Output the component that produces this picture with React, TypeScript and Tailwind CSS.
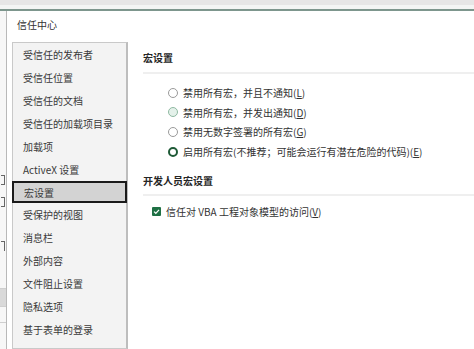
import React from 'react';

const font = { fontFamily: '"Noto Sans CJK SC", "Noto Sans", sans-serif' };

const navItems = [
  '受信任的发布者',
  '受信任位置',
  '受信任的文档',
  '受信任的加载项目录',
  '加载项',
  'ActiveX 设置',
  '宏设置',
  '受保护的视图',
  '消息栏',
  '外部内容',
  '文件阻止设置',
  '隐私选项',
  '基于表单的登录',
];

type RadioKind = 'off' | 'hover' | 'on';

const options: { label: string; key: string; kind: RadioKind }[] = [
  { label: '禁用所有宏，并且不通知(', key: 'L', kind: 'off' },
  { label: '禁用所有宏，并发出通知(', key: 'D', kind: 'hover' },
  { label: '禁用无数字签署的所有宏(', key: 'G', kind: 'off' },
  { label: '启用所有宏(不推荐；可能会运行有潜在危险的代码)(', key: 'E', kind: 'on' },
];

function Radio({ kind }: { kind: RadioKind }) {
  if (kind === 'on') {
    return <span className="box-border h-[10px] w-[10px] rounded-full border-[2.5px] border-[#1e5a36] bg-white" />;
  }
  if (kind === 'hover') {
    return <span className="box-border h-[10px] w-[10px] rounded-full border border-[#8fb9a2] bg-[#e4f1ea]" />;
  }
  return <span className="box-border h-[10px] w-[10px] rounded-full border border-[#9a9a9a] bg-white" />;
}

export default function App() {
  return (
    <div className="flex h-[349px] w-[474px] flex-col overflow-hidden bg-white text-[10px]" style={font}>
      {/* window chrome above the dialog */}
      <div className="h-[5px] bg-[#e6e6e6]" />
      <div className="h-[4px] bg-[#f3f5f4]" />
      <div className="h-[2px] bg-[#7d968d]" />

      <div className="flex flex-1">
        {/* sheet peeking out on the left */}
        <div className="flex w-[6px] flex-col bg-[#f7f7f7]">
          <div className="h-[164px]" />
          <div className="ml-[1px] h-[10px] w-[4px] border-y border-r border-[#666]" />
          <div className="h-[12px]" />
          <div className="ml-[1px] h-[10px] w-[4px] border-y border-r border-[#666]" />
          <div className="h-[34px]" />
          <div className="ml-[1px] h-[10px] w-[4px] border-t border-r border-[#666]" />
          <div className="h-[38px] border-b border-[#cfcfcf]" />
          <div className="h-[18px] border-b border-[#cfcfcf] bg-[#d9d9d9]" />
          <div className="h-[16px] border-b border-[#cfcfcf]" />
        </div>

        {/* dialog */}
        <div className="flex flex-1 flex-col border-l border-[#b9b9b9] bg-white">
          <div className="flex h-[31px] items-center pb-[4px] pl-[10px] text-[#333]">信任中心</div>

          <div className="flex flex-1">
            <nav className="ml-[5px] flex w-[116px] flex-col border border-r-2 border-[#c9c9c9] border-r-[#bdbdbd] bg-[#f3f3f3] text-[#3a3a3a]">
              {navItems.map((item) =>
                item === '宏设置' ? (
                  <div
                    key={item}
                    className="-ml-px box-border flex h-[22px] w-[115px] items-center border-2 border-[#1a1a1a] bg-[#d3d3d3] pl-[10px]"
                  >
                    {item}
                  </div>
                ) : (
                  <div key={item} className="flex h-[23px] items-center pl-[10px]">
                    {item}
                  </div>
                )
              )}
            </nav>

            <section className="flex flex-1 flex-col pl-[15px] text-[#333]">
              <h2 className="mt-[9px] h-[14px] font-bold leading-[14px] text-[#262626]">宏设置</h2>
              <div className="mt-[7px] h-[2px] bg-[#efefef]" />

              <div className="mt-[9px] flex flex-col pl-[25px]">
                {options.map((o) => (
                  <label key={o.key} className="flex h-[19.6px] items-center gap-[5px]">
                    <Radio kind={o.kind} />
                    <span>
                      {o.label}
                      <span className="underline">{o.key}</span>)
                    </span>
                  </label>
                ))}
              </div>

              <h2 className="mt-[13px] h-[14px] font-bold leading-[14px] text-[#262626]">开发人员宏设置</h2>
              <div className="mt-[6px] h-[2px] bg-[#efefef]" />

              <label className="mt-[5px] flex h-[20px] items-center gap-[5px] pl-[9px]">
                <span className="flex h-[9px] w-[9px] items-center justify-center rounded-[1px] bg-[#1f7044]">
                  <svg width="7" height="7" viewBox="0 0 10 10">
                    <path d="M1.5 5.2 L4 7.6 L8.6 2.6" fill="none" stroke="#fff" strokeWidth="1.8" />
                  </svg>
                </span>
                <span>
                  信任对 VBA 工程对象模型的访问(<span className="underline">V</span>)
                </span>
              </label>
            </section>
          </div>
        </div>
      </div>
    </div>
  );
}
